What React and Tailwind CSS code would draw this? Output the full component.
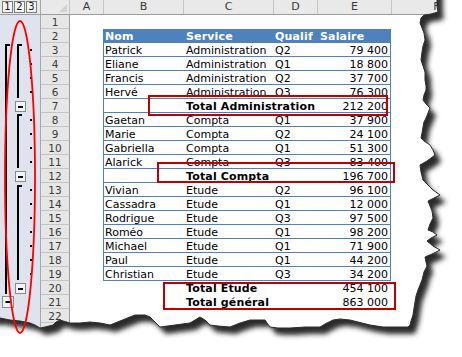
import React from "react";

const N = (s) => s.replace(" ", "\u00a0");

const data = {
  2: { kind: "head", b: "Nom", c: "Service", d: "Qualif", e: "Salaire" },
  3: { kind: "data", b: "Patrick", c: "Administration", d: "Q2", e: "79 400" },
  4: { kind: "data", b: "Eliane", c: "Administration", d: "Q1", e: "18 800" },
  5: { kind: "data", b: "Francis", c: "Administration", d: "Q2", e: "37 700" },
  6: { kind: "data", b: "Hervé", c: "Administration", d: "Q3", e: "76 300" },
  7: { kind: "sub", c: "Total Administration", e: "212 200" },
  8: { kind: "data", b: "Gaetan", c: "Compta", d: "Q1", e: "37 900" },
  9: { kind: "data", b: "Marie", c: "Compta", d: "Q2", e: "24 100" },
  10: { kind: "data", b: "Gabriella", c: "Compta", d: "Q1", e: "51 300" },
  11: { kind: "data", b: "Alarick", c: "Compta", d: "Q3", e: "83 400" },
  12: { kind: "sub", c: "Total Compta", e: "196 700" },
  13: { kind: "data", b: "Vivian", c: "Etude", d: "Q2", e: "96 100" },
  14: { kind: "data", b: "Cassadra", c: "Etude", d: "Q1", e: "12 000" },
  15: { kind: "data", b: "Rodrigue", c: "Etude", d: "Q3", e: "97 500" },
  16: { kind: "data", b: "Roméo", c: "Etude", d: "Q1", e: "98 200" },
  17: { kind: "data", b: "Michael", c: "Etude", d: "Q1", e: "71 900" },
  18: { kind: "data", b: "Paul", c: "Etude", d: "Q1", e: "44 200" },
  19: { kind: "data", b: "Christian", c: "Etude", d: "Q3", e: "34 200" },
  20: { kind: "tot", c: "Total Etude", e: "454 100" },
  21: { kind: "tot", c: "Total général", e: "863 000" },
};

function TableCells({ row }) {
  const head = row.kind === "head";
  const sub = row.kind === "sub";
  return (
    <div
      className={
        "flex w-[288px] shrink-0 h-[14px] border-l border-r border-b border-[#4f81bd] " +
        (head ? "bg-[#4f81bd] text-white font-bold tracking-[0.15px]" : "text-black")
      }
    >
      <div className="w-[79px] shrink-0 pl-px whitespace-nowrap">{row.b}</div>
      {sub ? (
        <div className="w-[134px] shrink-0 pl-[3px] whitespace-nowrap overflow-hidden font-bold tracking-[0.15px]">
          {row.c}
        </div>
      ) : (
        <>
          <div className="w-[90px] shrink-0 pl-[3px] whitespace-nowrap">{row.c}</div>
          <div className="w-[44px] shrink-0 pl-[2px] whitespace-nowrap">{row.d}</div>
        </>
      )}
      <div
        className={
          "w-[73px] shrink-0 whitespace-nowrap " +
          (head ? "pl-[3px] text-left" : "pr-[2px] text-right")
        }
      >
        {head ? row.e : N(row.e)}
      </div>
    </div>
  );
}

function Row({ n }) {
  const row = data[n];
  const inTable = row && row.kind !== "tot";
  return (
    <div className="flex h-[14px] leading-[15px]">
      <div className="w-[29px] shrink-0 h-[14px] border-r border-b border-r-[#9c9c9c] border-b-[#c4c4c4] bg-[#e6e6e6] text-center text-[10.5px] leading-[14px] text-[#3a3a3a]">
        {n}
      </div>
      <div className="w-[33px] shrink-0" />
      {inTable ? (
        <TableCells row={row} />
      ) : row ? (
        <div className="flex w-[288px] shrink-0 text-black">
          <div className="w-[80px] shrink-0" />
          <div className="w-[134px] shrink-0 pl-[3px] whitespace-nowrap font-bold tracking-[0.15px]">
            {row.c}
          </div>
          <div className="w-[73px] shrink-0 pr-[2px] text-right whitespace-nowrap">
            {N(row.e)}
          </div>
        </div>
      ) : null}
    </div>
  );
}

function OutlineDrawing() {
  const top = (r) => 15 + 14 * (r - 1) - 15;
  const dotRows = [3, 4, 5, 6, 8, 9, 10, 11, 13, 14, 15, 16, 17, 18, 19];
  const groups = [
    [44, 98],
    [114, 168],
    [185, 280],
  ];
  return (
    <svg width="40" height="330" className="block">
      <rect x="5" y={44 - 15} width="2" height={294 - 44} fill="#000" />
      <rect x="5" y={44 - 15} width="5" height="2" fill="#000" />
      {groups.map(([a, b], i) => (
        <g key={i}>
          <rect x="17" y={a - 15} width="2" height={b - a} fill="#000" />
          <rect x="17" y={a - 15} width="5" height="2" fill="#000" />
        </g>
      ))}
      {dotRows.map((r) => (
        <rect key={r} x="30" y={top(r) + 6} width="2" height="2" fill="#000" />
      ))}
      {[7, 12, 20].map((r) => (
        <g key={r}>
          <rect x="15.5" y={top(r) + 2.5} width="10" height="10" fill="#f2f3f7" stroke="#8a8a8a" />
          <rect x="18" y={top(r) + 7} width="5" height="2" fill="#000" />
        </g>
      ))}
      <rect x="2.5" y={top(21) + 1.5} width="11" height="11" fill="#f2f3f7" stroke="#8a8a8a" />
      <rect x="5.5" y={top(21) + 6} width="5" height="2" fill="#000" />
    </svg>
  );
}

const edgePts = [
  [437, -20], [437, 6], [438, 12], [431, 14], [424, 15], [421, 18], [420, 23], [422, 28], [424, 33],
  [425, 40], [423, 46], [422, 52], [421, 60], [423, 66], [425, 72], [425, 80], [426, 86], [426, 90],
  [424, 95], [423, 100], [426, 104], [430, 108], [428, 113], [426, 118], [424, 122], [423, 127],
  [422, 133], [421, 138], [424, 141], [430, 145], [433, 150], [435, 155], [431, 158], [427, 161],
  [420, 165], [421, 172], [423, 180], [428, 185], [433, 190], [440, 195], [434, 198], [428, 201],
  [430, 206], [432, 211], [433, 218], [430, 224], [428, 230], [433, 232], [437, 235], [431, 238],
  [427, 241], [433, 246], [440, 250], [432, 254], [425, 257], [426, 262], [427, 266], [424, 272],
  [422, 280], [420, 285], [418, 290], [416, 296], [415, 302], [414, 308], [413, 315], [411, 321],
  [410, 325], [408, 327], [395, 327], [383, 327], [370, 325], [358, 322], [350, 320], [340, 319],
  [333, 320], [325, 324], [320, 327], [305, 327], [290, 328], [278, 328], [270, 327], [267, 323],
  [265, 320], [250, 320], [240, 323], [230, 327], [218, 326], [210, 325], [205, 320], [200, 317],
  [195, 320], [190, 323], [175, 325], [160, 327], [155, 322], [150, 317], [145, 315], [135, 315],
  [125, 319], [115, 323], [110, 325], [100, 323], [90, 322], [80, 323], [70, 323], [63, 321],
  [60, 320], [56, 322], [53, 325], [45, 327], [40, 328], [35, 325], [30, 323], [20, 321],
  [10, 320], [0, 318], [-20, 318],
];
const polyStr = edgePts.map((p) => p.join(",")).join(" ");
const paperPath = "M-20,-20 L" + edgePts.map((p) => p.join(",")).join(" L") + " Z";
const outsidePath = "M0,0 H462 V357 H0 Z " + paperPath;

function TornOverlay() {
  return (
    <svg
      width="462"
      height="357"
      className="absolute left-0 top-0 pointer-events-none"
    >
      <defs>
        <clipPath id="outside">
          <path d={outsidePath} clipRule="evenodd" />
        </clipPath>
        <filter id="blur" x="-10%" y="-10%" width="120%" height="120%">
          <feGaussianBlur stdDeviation="2.4" />
        </filter>
      </defs>
      <path d={outsidePath} fill="#ffffff" fillRule="evenodd" />
      <g clipPath="url(#outside)">
        <path d={paperPath} fill="#2a2a2a" transform="translate(6,7)" filter="url(#blur)" />
      </g>
      <polyline points={polyStr} fill="none" stroke="#2e2e2e" strokeWidth="1" />
    </svg>
  );
}

export default function App() {
  const rowNums = Array.from({ length: 24 }, (_, i) => i + 1);
  const cols = [
    ["A", "w-[33px]", ""],
    ["B", "w-[80px]", "border-l"],
    ["C", "w-[90px]", "border-l"],
    ["D", "w-[44px]", "border-l"],
    ["E", "w-[74px]", "border-l"],
    ["F", "w-[90px]", "border-l"],
  ];
  return (
    <div className="relative w-[462px] h-[357px] overflow-hidden bg-white font-['DejaVu_Sans',sans-serif] text-[11px]">
      <div className="flex flex-col">
        <div className="flex h-[15px] bg-[#e9e9e9] border-b border-[#9c9c9c]">
          <div className="w-[41px] shrink-0 border-r border-[#a8a8a8] flex gap-px pl-[2px] pt-px">
            {["1", "2", "3"].map((t) => (
              <div
                key={t}
                className="w-[11px] h-[12px] border border-[#7c7c7c] bg-[#f4f4f4] text-[10px] leading-[10px] text-center text-[#1a1a1a]"
              >
                {t}
              </div>
            ))}
          </div>
          <div className="w-[29px] shrink-0 border-r border-[#c4c4c4] relative">
            <div className="absolute right-[2px] bottom-[2px] w-0 h-0 border-l-[8px] border-l-transparent border-b-[8px] border-b-[#d2d2d2]" />
          </div>
          {cols.map(([l, w, b]) => (
            <div
              key={l}
              className={
                w +
                " shrink-0 text-center text-[11px] leading-[14px] text-[#3a3a3a] border-[#c4c4c4] " +
                b
              }
            >
              {l}
            </div>
          ))}
        </div>
        <div className="flex">
          <div className="w-[41px] shrink-0 bg-[#dfe3ed] border-r border-[#a3a9b4]">
            <OutlineDrawing />
          </div>
          <div className="flex flex-col">
            {rowNums.map((n) => (
              <Row key={n} n={n} />
            ))}
          </div>
        </div>
      </div>

      <div className="absolute left-[148px] top-[95px] w-[240px] h-[21px] border-2 border-[#c00000]" />
      <div className="absolute left-[157px] top-[162px] w-[238px] h-[21px] border-2 border-[#c00000]" />
      <div className="absolute left-[163px] top-[282px] w-[233px] h-[28px] border-2 border-[#c00000]" />

      <TornOverlay />

      <svg width="462" height="357" className="absolute left-0 top-0 pointer-events-none">
        <ellipse cx="20" cy="177" rx="15" ry="156" fill="none" stroke="#ff0000" strokeWidth="1.8" />
      </svg>
    </div>
  );
}
